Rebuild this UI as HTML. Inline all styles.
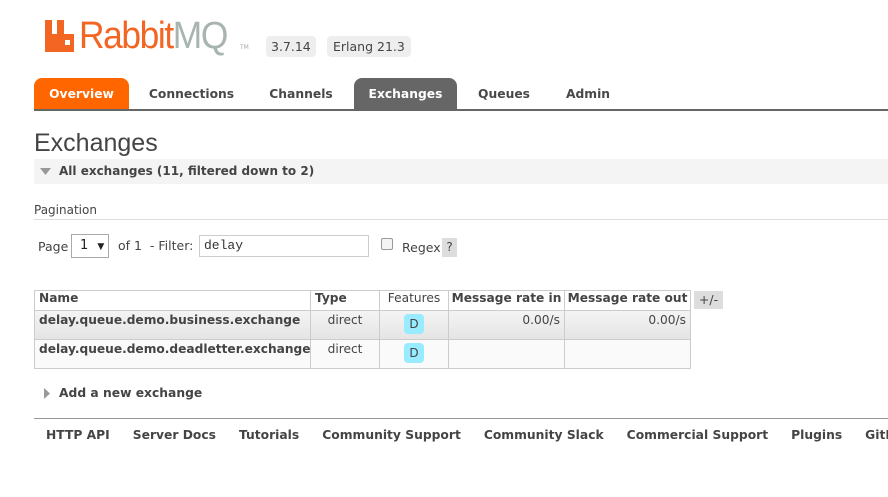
<!DOCTYPE html>
<html><head><meta charset="utf-8"><style>
*{margin:0;padding:0;box-sizing:border-box}
body{width:888px;height:497px;overflow:hidden;background:#fff;font-family:"DejaVu Sans",Verdana,sans-serif;color:#444;position:relative}
.a{position:absolute;white-space:nowrap}
.b{font-weight:bold}
.tab{position:absolute;top:78px;height:32px;font-size:12.3px;font-weight:bold;line-height:33px;text-align:center;color:#484848;border-radius:8px 8px 0 0}
table{table-layout:fixed}
td,th{border:1px solid #ccc;font-size:12.2px;padding:0 4px;vertical-align:top;overflow:hidden}
.d{display:inline-block;background:#99ebff;border-radius:4px;width:20px;height:20px;line-height:20px;text-align:center;font-size:12px;color:#444;margin-top:3px}
</style></head><body>
<svg class="a" style="left:45px;top:20px" width="32" height="32" viewBox="0 0 32 32"><path d="M0 0h7v14h5V0h7v14h0v0h10v18H0z" fill="#f26522"/><rect x="20" y="20" width="5" height="5" fill="#fff"/></svg>
<div class="a" style="left:79px;top:15px;font-size:38px;font-family:'Liberation Sans',sans-serif;color:#f26522;letter-spacing:-1.5px;transform:scaleX(0.93);transform-origin:left">Rabbit<span style="color:#a8b4ae">MQ</span></div>
<div class="a" style="left:240px;top:44px;font-size:6px;color:#aaa">TM</div>
<div class="a" style="left:266px;top:36px;height:21px;padding:0 5px;background:#eee;border-radius:4px;font-size:12.5px;line-height:21px">3.7.14</div>
<div class="a" style="left:327px;top:36px;height:21px;padding:0 6px;background:#eee;border-radius:4px;font-size:12.5px;line-height:21px">Erlang 21.3</div>
<div class="tab" style="left:34px;width:95px;background:#f60;color:#fff">Overview</div>
<div class="tab" style="left:138px;width:107px">Connections</div>
<div class="tab" style="left:258px;width:86px">Channels</div>
<div class="tab" style="left:354px;width:103px;background:#666;color:#fff">Exchanges</div>
<div class="tab" style="left:466px;width:76px">Queues</div>
<div class="tab" style="left:555px;width:66px">Admin</div>
<div class="a" style="left:34px;top:109px;width:854px;height:2px;background:#666"></div>
<div class="a" style="left:34px;top:129px;font-size:25px;font-family:'Liberation Sans',sans-serif;color:#444">Exchanges</div>
<div class="a" style="left:34px;top:159px;width:854px;height:25px;background:#f4f4f4"></div>
<svg class="a" style="left:40px;top:168px" width="11" height="7"><path d="M0 0h11L5.5 7z" fill="#999"/></svg>
<div class="a b" style="left:59px;top:164px;font-size:12px">All exchanges (11, filtered down to 2)</div>
<div class="a" style="left:34px;top:203px;font-size:12px">Pagination</div>
<div class="a" style="left:34px;top:219px;width:854px;height:1px;background:#ddd"></div>
<div class="a" style="left:38px;top:239px;font-size:12.5px">Page</div>
<div class="a" style="left:71px;top:234px;width:38px;height:24px;border:1px solid #aaa;font-size:13px;line-height:22px;padding-left:8px;color:#222">1 <span style="font-size:9px;margin-left:5px">▼</span></div>
<div class="a" style="left:118px;top:238px;font-size:12.5px">of 1 &nbsp;- Filter:</div>
<div class="a" style="left:199px;top:235px;width:170px;height:22px;border:1px solid #ccc;font-family:'Liberation Mono',monospace;font-size:13px;line-height:20px;padding-left:4px;color:#333">delay</div>
<div class="a" style="left:381px;top:238px;width:12px;height:12px;border:1px solid #999;border-radius:2px;background:#f4f4f4"></div>
<div class="a" style="left:402px;top:240px;font-size:12.5px">Regex</div>
<div class="a" style="left:442px;top:238px;width:15px;height:19px;background:#ddd;font-size:12px;line-height:19px;text-align:center">?</div>
<table class="a" style="left:34px;top:290px;border-collapse:collapse;width:656px">
<colgroup><col style="width:276px"><col style="width:69px"><col style="width:69px"><col style="width:116px"><col style="width:126px"></colgroup>
<tr style="height:20px"><th style="text-align:left">Name</th><th style="text-align:left">Type</th><th style="font-weight:normal">Features</th><th style="padding:0 2px">Message rate in</th><th style="padding:0 2px">Message rate out</th></tr>
<tr style="height:29px;background:linear-gradient(#f4f4f4,#e4e4e4)"><td class="b" style="padding-top:2px">delay.queue.demo.business.exchange</td><td style="text-align:center;padding-top:2px">direct</td><td style="text-align:center"><span class="d">D</span></td><td style="text-align:right;padding-top:2px">0.00/s</td><td style="text-align:right;padding-top:2px">0.00/s</td></tr>
<tr style="height:29px;background:#fafafa"><td class="b" style="padding:2px 2px 0 4px">delay.queue.demo.deadletter.exchange</td><td style="text-align:center;padding-top:2px">direct</td><td style="text-align:center"><span class="d">D</span></td><td></td><td></td></tr>
</table>
<div class="a" style="left:694px;top:291px;width:29px;height:18px;background:#ddd;font-size:12.5px;line-height:18px;text-align:center">+/-</div>
<svg class="a" style="left:44px;top:388px" width="6" height="11"><path d="M0 0l6 5.5L0 11z" fill="#999"/></svg>
<div class="a b" style="left:59px;top:386px;font-size:12.3px">Add a new exchange</div>
<div class="a" style="left:34px;top:418px;width:854px;height:1px;background:#999"></div>
<div class="a b" style="left:46px;top:428px;font-size:12.3px">HTTP API<span style="margin-left:23px">Server Docs</span><span style="margin-left:23px">Tutorials</span><span style="margin-left:23px">Community Support</span><span style="margin-left:23px">Community Slack</span><span style="margin-left:23px">Commercial Support</span><span style="margin-left:23px">Plugins</span><span style="margin-left:23px">GitHub</span></div>
</body></html>
